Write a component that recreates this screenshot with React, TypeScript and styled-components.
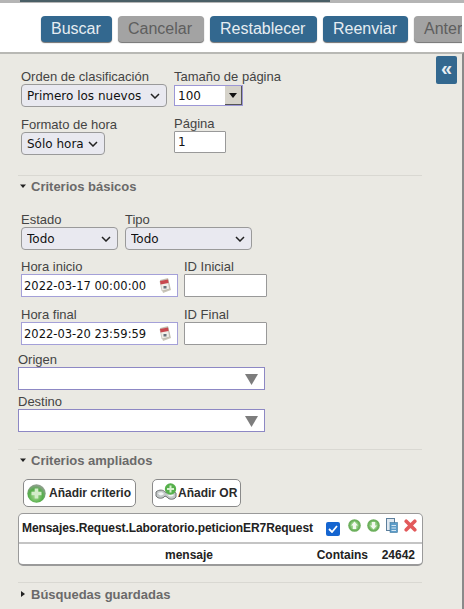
import React from "react";
import styled, { createGlobalStyle } from "styled-components";

const GlobalStyle = createGlobalStyle`
  html, body {
    margin: 0;
    padding: 0;
    height: 100%;
    background: #ffffff;
    overflow: hidden;
  }
  body {
    font-family: "Liberation Sans", Arial, sans-serif;
  }
`;

const chevron =
  "url(\"data:image/svg+xml,%3Csvg xmlns='http://www.w3.org/2000/svg' width='10' height='6'%3E%3Cpath d='M1 1l4 4 4-4' fill='none' stroke='%23222' stroke-width='1.5'/%3E%3C/svg%3E\")";

const Page = styled.div`
  width: 464px;
  height: 609px;
  overflow: hidden;
  display: flex;
  flex-direction: column;
`;
const TopStrip = styled.div`
  height: 3px;
  background: #b5b5b5;
  padding-left: 20px;
  padding-right: 134px;
`;
const TopStripFill = styled.div`
  height: 2px;
  background: #4a5f66;
`;
const Toolbar = styled.div`
  height: 49px;
  box-sizing: border-box;
  margin-right: 2px;
  padding: 13px 0 0 41px;
  display: flex;
  gap: 6px;
  overflow: hidden;
  background: #ffffff;
`;
const ToolButton = styled.div<{ $disabled?: boolean; $width: number }>`
  flex: none;
  box-sizing: border-box;
  width: ${(p) => p.$width}px;
  height: 26px;
  padding-left: 10px;
  border-radius: 4px;
  background: ${(p) => (p.$disabled ? "#a3a3a3" : "#33688f")};
  box-shadow: 0 1px 1px #6f6f6f;
  color: ${(p) => (p.$disabled ? "#5e5e5e" : "#e6edf2")};
  font-size: 16px;
  line-height: 25px;
  white-space: nowrap;
`;
const Panel = styled.div`
  position: relative;
  flex: 1;
  background: #eae9e3;
  border-top: 2px solid #b8b8b4;
  border-right: 2px solid #8a8a8a;
  padding: 15px 0 0 18px;
`;
const CollapseButton = styled.div`
  position: absolute;
  top: 2px;
  left: 436px;
  width: 21px;
  height: 28px;
  border-radius: 2px;
  background: #33688f;
  color: #e8eef2;
  font-size: 20px;
  font-weight: bold;
  line-height: 24px;
  text-align: center;
`;
const FieldRow = styled.div<{ $columns: string; $top?: number; $indent?: number }>`
  display: grid;
  grid-template-columns: ${(p) => p.$columns};
  align-items: start;
  margin-top: ${(p) => p.$top ?? 0}px;
  margin-left: ${(p) => p.$indent ?? 3}px;
`;
const Field = styled.div<{ $lift?: number }>`
  display: flex;
  flex-direction: column;
  align-items: flex-start;
  margin-top: ${(p) => -(p.$lift ?? 0)}px;
`;
const Label = styled.label`
  font-size: 13px;
  line-height: 15px;
  color: #444444;
  white-space: nowrap;
`;
const Select = styled.select<{ $width: number }>`
  appearance: none;
  box-sizing: border-box;
  width: ${(p) => p.$width}px;
  height: 23px;
  padding: 0 0 0 5px;
  border: 1px solid #9a9a9a;
  border-radius: 4px;
  background: #e9e9f0 ${chevron} no-repeat right 6px center;
  font-family: "DejaVu Sans", Verdana, sans-serif;
  font-size: 12px;
  color: #111111;
`;
const TextBox = styled.input<{ $width: number; $height?: number }>`
  box-sizing: border-box;
  width: ${(p) => p.$width}px;
  height: ${(p) => p.$height ?? 23}px;
  padding: 0 3px;
  border: 1px solid #999999;
  border-radius: 1px;
  background: #ffffff;
  font-family: "DejaVu Sans", Verdana, sans-serif;
  font-size: 12px;
  color: #111111;
`;
const ComboFrame = styled.div`
  box-sizing: border-box;
  width: 69px;
  height: 21px;
  margin-top: 1px;
  display: flex;
  align-items: center;
  justify-content: space-between;
  padding-left: 3px;
  background: #ffffff;
  border: 1px solid #9c97d6;
  font-family: "DejaVu Sans", Verdana, sans-serif;
  font-size: 12px;
  color: #111111;
`;
const ComboArrow = styled.div`
  width: 17px;
  height: 19px;
  display: flex;
  align-items: center;
  justify-content: center;
  background: #d6d3ca;
  border-right: 1px solid #555555;
  border-bottom: 1px solid #555555;
  box-sizing: border-box;
`;
const DateFrame = styled.div`
  box-sizing: border-box;
  width: 157px;
  height: 23px;
  display: flex;
  align-items: center;
  justify-content: space-between;
  padding: 0 6px 0 2px;
  background: #ffffff;
  border: 1px solid #a4a0d8;
  font-family: "DejaVu Sans", Verdana, sans-serif;
  font-size: 11.5px;
  color: #111111;
  white-space: nowrap;
`;
const PickerBox = styled.div`
  box-sizing: border-box;
  width: 247px;
  height: 23px;
  display: flex;
  align-items: center;
  justify-content: flex-end;
  padding-right: 6px;
  background: #ffffff;
  border: 1px solid #8d88c4;
`;
const Divider = styled.div<{ $top: number }>`
  width: 404px;
  height: 1px;
  margin-top: ${(p) => p.$top}px;
  background: #d9d8d2;
`;
const SectionHeading = styled.div<{ $top?: number }>`
  display: flex;
  align-items: center;
  gap: 5px;
  margin: ${(p) => p.$top ?? 0}px 0 0 2px;
  height: 20px;
  font-size: 13px;
  font-weight: bold;
  color: #6a6a6a;
`;
const ActionRow = styled.div`
  display: flex;
  gap: 16px;
  margin: 9px 0 6px 5px;
`;
const ActionButton = styled.div<{ $width: number; $inset: number; $space: number }>`
  box-sizing: border-box;
  width: ${(p) => p.$width}px;
  height: 28px;
  display: flex;
  align-items: center;
  gap: ${(p) => p.$space}px;
  padding-left: ${(p) => p.$inset}px;
  background: #ffffff;
  border: 1px solid #8a8a8a;
  border-radius: 5px;
  font-size: 12px;
  font-weight: bold;
  color: #2a2a2a;
  white-space: nowrap;
`;
const CriteriaTable = styled.div`
  box-sizing: border-box;
  width: 405px;
  height: 53px;
  background: #ffffff;
  border: 1px solid #9a9a9a;
  border-bottom-width: 2px;
  border-radius: 5px;
`;
const CriteriaHead = styled.div`
  height: 28px;
  display: flex;
  align-items: center;
  padding-left: 3px;
  border-bottom: 2px solid #c4c4c4;
  font-size: 12px;
  letter-spacing: -0.08px;
  font-weight: bold;
  color: #222222;
  white-space: nowrap;
`;
const HeadIcons = styled.div`
  display: flex;
  align-items: center;
  gap: 6px;
  margin: 0 0 5px 13px;
`;
const CheckBox = styled.div`
  width: 14px;
  height: 14px;
  margin: 6px 2px 0 0;
  border-radius: 2px;
  background: #1565d0;
  display: flex;
  align-items: center;
  justify-content: center;
`;
const CriteriaRow = styled.div`
  height: 22px;
  display: grid;
  grid-template-columns: 194px 155px 1fr;
  align-items: center;
  font-size: 12px;
  font-weight: bold;
  color: #222222;
`;
const CellRight = styled.div<{ $pad?: number }>`
  text-align: right;
  padding-right: ${(p) => p.$pad ?? 0}px;
`;

const Triangle = ({ open }: { open: boolean }) => (
  <svg width="6" height="8" viewBox="0 0 6 8">
    {open ? <path d="M0 2.5h6L3 6z" fill="#222" /> : <path d="M1 1l4 3-4 3z" fill="#222" />}
  </svg>
);

const CalendarIcon = () => (
  <svg width="12" height="15" viewBox="0 0 12 15">
    <path d="M1 2l8-2 3 12-8 3z" fill="#c9c5b8" />
    <path d="M1 3l8-1.5 1.6 9.5-7.6 2z" fill="#f1eee8" stroke="#aaa496" strokeWidth="0.5" />
    <path d="M1 3l8-1.5.6 3.5-8 1.5z" fill="#c8484e" />
    <rect x="4.5" y="8" width="3" height="2.5" fill="#66727d" />
  </svg>
);

const PickerArrow = () => (
  <svg width="13" height="12" viewBox="0 0 13 12">
    <path d="M0 1h13L6.5 12z" fill="#7d7d7d" />
  </svg>
);

const PlusBall = () => (
  <svg width="19" height="19" viewBox="0 0 19 19">
    <defs>
      <radialGradient id="plusBall" cx="45%" cy="65%" r="60%">
        <stop offset="0%" stopColor="#a8dc92" />
        <stop offset="65%" stopColor="#55ad4a" />
        <stop offset="100%" stopColor="#8d9f8b" />
      </radialGradient>
    </defs>
    <circle cx="9.5" cy="9.5" r="9.2" fill="url(#plusBall)" />
    <path d="M7.7 4.5h3.6v3.2h3.2v3.6h-3.2v3.2H7.7v-3.2H4.5V7.7h3.2z" fill="#d3ecc9" />
  </svg>
);

const GlassesPlus = () => (
  <svg width="23" height="20" viewBox="0 0 23 20">
    <path d="M1 9c3-3 8-2 9 0l2 1c2-2 7-2 9 0v4c-2 3-7 3-9 0l-2-1c-2 3-7 3-9 0z" fill="#c4c9c9" stroke="#6f7373" />
    <path d="M3 10c2-1 5-1 6 1-2 2-5 2-6-1zM13 12c2-1 5-1 6 0-2 2-5 2-6 0z" fill="#f4f6f6" />
    <circle cx="15.5" cy="6" r="5.7" fill="#56b04c" />
    <path d="M14.500 2.500h2V5H19v2h-2.500v2.500h-2V7H12V5h2.500z" fill="#d8f0d0" />
  </svg>
);

const ArrowBall = ({ up }: { up: boolean }) => (
  <svg width="13" height="13" viewBox="0 0 13 13">
    <circle cx="6.5" cy="6.5" r="6.3" fill="#6caf5c" />
    <circle cx="6.5" cy="6.5" r="4.2" fill="#8ccb7c" />
    <path d={up ? "M6.5 2.5l3.5 4H8.200V10H4.800V6.500H3z" : "M6.5 10.500l3.500-4H8.200V3H4.800v3.500H3z"} fill="#f2f8ee" />
  </svg>
);

const DocsIcon = () => (
  <svg width="12" height="15" viewBox="0 0 12 15">
    <rect x="0.5" y="0.5" width="8" height="12" fill="#dfe8f0" stroke="#5c7f9c" />
    <rect x="4" y="4.5" width="7.5" height="10" fill="#5b9bc8" stroke="#3e789f" strokeWidth="0.6" />
    <path d="M5.5 7.5h4.500M5.5 10h4.500M5.5 12.500h4.500" stroke="#d4e6f2" />
  </svg>
);

const CrossIcon = () => (
  <svg width="13" height="13" viewBox="0 0 13 13">
    <path d="M2.2 2.2l8.6 8.6M10.8 2.2l-8.6 8.6" stroke="#e2595b" strokeWidth="3.6" strokeLinecap="round" />
  </svg>
);

const App: React.FC = () => (
  <Page>
    <GlobalStyle />
    <TopStrip>
      <TopStripFill />
    </TopStrip>
    <Toolbar>
      <ToolButton $width={71}>Buscar</ToolButton>
      <ToolButton $width={86} $disabled>
        Cancelar
      </ToolButton>
      <ToolButton $width={107}>Restablecer</ToolButton>
      <ToolButton $width={85}>Reenviar</ToolButton>
      <ToolButton $width={86} $disabled>
        Anterior
      </ToolButton>
    </Toolbar>
    <Panel>
      <CollapseButton>«</CollapseButton>
      <FieldRow $columns="153px auto">
        <Field>
          <Label>Orden de clasificación</Label>
          <Select $width={146} defaultValue="new">
            <option value="new">Primero los nuevos</option>
          </Select>
        </Field>
        <Field>
          <Label>Tamaño de página</Label>
          <ComboFrame>
            100
            <ComboArrow>
              <svg width="8" height="5" viewBox="0 0 8 5">
                <path d="M0 0h8L4 5z" fill="#111" />
              </svg>
            </ComboArrow>
          </ComboFrame>
        </Field>
      </FieldRow>
      <FieldRow $columns="153px auto" $top={10}>
        <Field>
          <Label>Formato de hora</Label>
          <Select $width={84} defaultValue="time">
            <option value="time">Sólo hora</option>
          </Select>
        </Field>
        <Field $lift={1}>
          <Label>Página</Label>
          <TextBox $width={52} $height={22} defaultValue="1" />
        </Field>
      </FieldRow>

      <Divider $top={20} />
      <SectionHeading>
        <Triangle open />
        Criterios básicos
      </SectionHeading>

      <FieldRow $columns="104px auto" $top={16}>
        <Field>
          <Label>Estado</Label>
          <Select $width={97} defaultValue="all">
            <option value="all">Todo</option>
          </Select>
        </Field>
        <Field>
          <Label>Tipo</Label>
          <Select $width={127} defaultValue="all">
            <option value="all">Todo</option>
          </Select>
        </Field>
      </FieldRow>
      <FieldRow $columns="163px auto" $top={9}>
        <Field>
          <Label>Hora inicio</Label>
          <DateFrame>
            2022-03-17 00:00:00
            <CalendarIcon />
          </DateFrame>
        </Field>
        <Field>
          <Label>ID Inicial</Label>
          <TextBox $width={83} />
        </Field>
      </FieldRow>
      <FieldRow $columns="163px auto" $top={10}>
        <Field>
          <Label>Hora final</Label>
          <DateFrame>
            2022-03-20 23:59:59
            <CalendarIcon />
          </DateFrame>
        </Field>
        <Field>
          <Label>ID Final</Label>
          <TextBox $width={83} />
        </Field>
      </FieldRow>
      <FieldRow $columns="auto" $indent={0} $top={7}>
        <Field>
          <Label>Origen</Label>
          <PickerBox>
            <PickerArrow />
          </PickerBox>
        </Field>
      </FieldRow>
      <FieldRow $columns="auto" $indent={0} $top={4}>
        <Field>
          <Label>Destino</Label>
          <PickerBox>
            <PickerArrow />
          </PickerBox>
        </Field>
      </FieldRow>

      <Divider $top={17} />
      <SectionHeading>
        <Triangle open />
        Criterios ampliados
      </SectionHeading>
      <ActionRow>
        <ActionButton $width={113} $inset={3} $space={3}>
          <PlusBall />
          Añadir criterio
        </ActionButton>
        <ActionButton $width={89} $inset={2} $space={0}>
          <GlassesPlus />
          Añadir OR
        </ActionButton>
      </ActionRow>
      <CriteriaTable>
        <CriteriaHead>
          Mensajes.Request.Laboratorio.peticionER7Request
          <HeadIcons>
            <CheckBox>
              <svg width="10" height="8" viewBox="0 0 10 8">
                <path d="M1 4l3 3 5-6" fill="none" stroke="#fff" strokeWidth="1.8" />
              </svg>
            </CheckBox>
            <ArrowBall up />
            <ArrowBall up={false} />
            <DocsIcon />
            <CrossIcon />
          </HeadIcons>
        </CriteriaHead>
        <CriteriaRow>
          <CellRight>mensaje</CellRight>
          <CellRight>Contains</CellRight>
          <CellRight $pad={7}>24642</CellRight>
        </CriteriaRow>
      </CriteriaTable>
      <Divider $top={16} />
      <SectionHeading $top={1}>
        <Triangle open={false} />
        Búsquedas guardadas
      </SectionHeading>
    </Panel>
  </Page>
);

export default App;
